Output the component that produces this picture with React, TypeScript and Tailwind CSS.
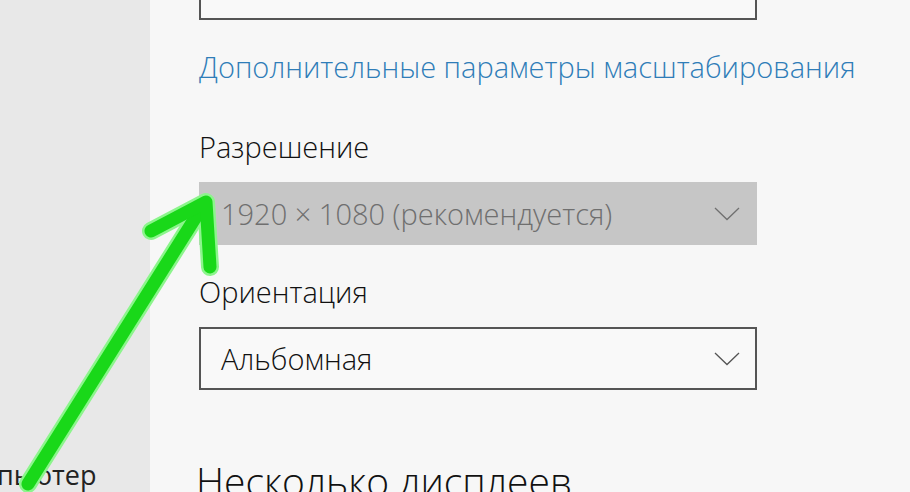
import React from 'react';

const font = { fontFamily: '"Open Sans", "Noto Sans", sans-serif' };

const Chevron: React.FC<{ className?: string }> = ({ className }) => (
  <svg width="26" height="14" viewBox="0 0 26 14" className={className}>
    <path d="M1 1 L13 12.5 L25 1" fill="none" stroke="currentColor" strokeWidth="1.3" />
  </svg>
);

const GreenArrow: React.FC = () => (
  <svg className="absolute left-0 top-0 pointer-events-none" width="910" height="492" viewBox="0 0 910 492">
    <g fill="none" strokeLinecap="round" strokeLinejoin="round">
      <g stroke="#8cf58c" strokeWidth="18">
        <path d="M28 484 L204 204" />
        <path d="M151 231 L206 202 L210 267" />
      </g>
      <g stroke="#19d819" strokeWidth="13">
        <path d="M28 484 L204 204" />
        <path d="M151 231 L206 202 L210 267" />
      </g>
    </g>
  </svg>
);

export default function App() {
  return (
    <div className="relative w-[910px] h-[492px] overflow-hidden flex bg-[#f7f7f7]" style={font}>
      {/* Sidebar */}
      <aside className="w-[150px] shrink-0 bg-[#e8e8e8] flex flex-col justify-end">
        <span className="text-[27px] leading-none text-[#222] -ml-[3px] mb-[4px] whitespace-nowrap">пьютер</span>
      </aside>

      {/* Content */}
      <main className="flex-1 pl-[49px] flex flex-col">
        <div className="shrink-0 w-[558px] h-[21px] -mt-[1px] border-2 border-t-0 border-[#555] bg-[#f9f9f9]" />

        <a className="shrink-0 mt-[30px] text-[29px] leading-[34px] text-[#2f7db8] font-light whitespace-nowrap">
          Дополнительные параметры масштабирования
        </a>

        <h3 className="shrink-0 mt-[46px] text-[29px] leading-[34px] text-[#111] font-light">Разрешение</h3>
        <div className="shrink-0 mt-[18px] w-[558px] h-[63px] bg-[#c6c6c6] flex items-center justify-between pl-[22px] pr-[17px]">
          <span className="text-[29px] font-light text-[#6f6f6f]">1920 × 1080 (рекомендуется)</span>
          <Chevron className="text-[#707070]" />
        </div>

        <h3 className="shrink-0 mt-[30px] text-[29px] leading-[34px] text-[#111] font-light">Ориентация</h3>
        <div className="shrink-0 mt-[18px] w-[558px] h-[63px] border-2 border-[#555] bg-[#f9f9f9] flex items-center justify-between pl-[20px] pr-[15px]">
          <span className="text-[29px] font-light text-[#111]">Альбомная</span>
          <Chevron className="text-[#555]" />
        </div>

        <h2 className="shrink-0 mt-[69px] -ml-[3px] text-[39px] leading-[44px] text-[#111] font-light whitespace-nowrap">
          Несколько дисплеев
        </h2>
      </main>

      <GreenArrow />
    </div>
  );
}
